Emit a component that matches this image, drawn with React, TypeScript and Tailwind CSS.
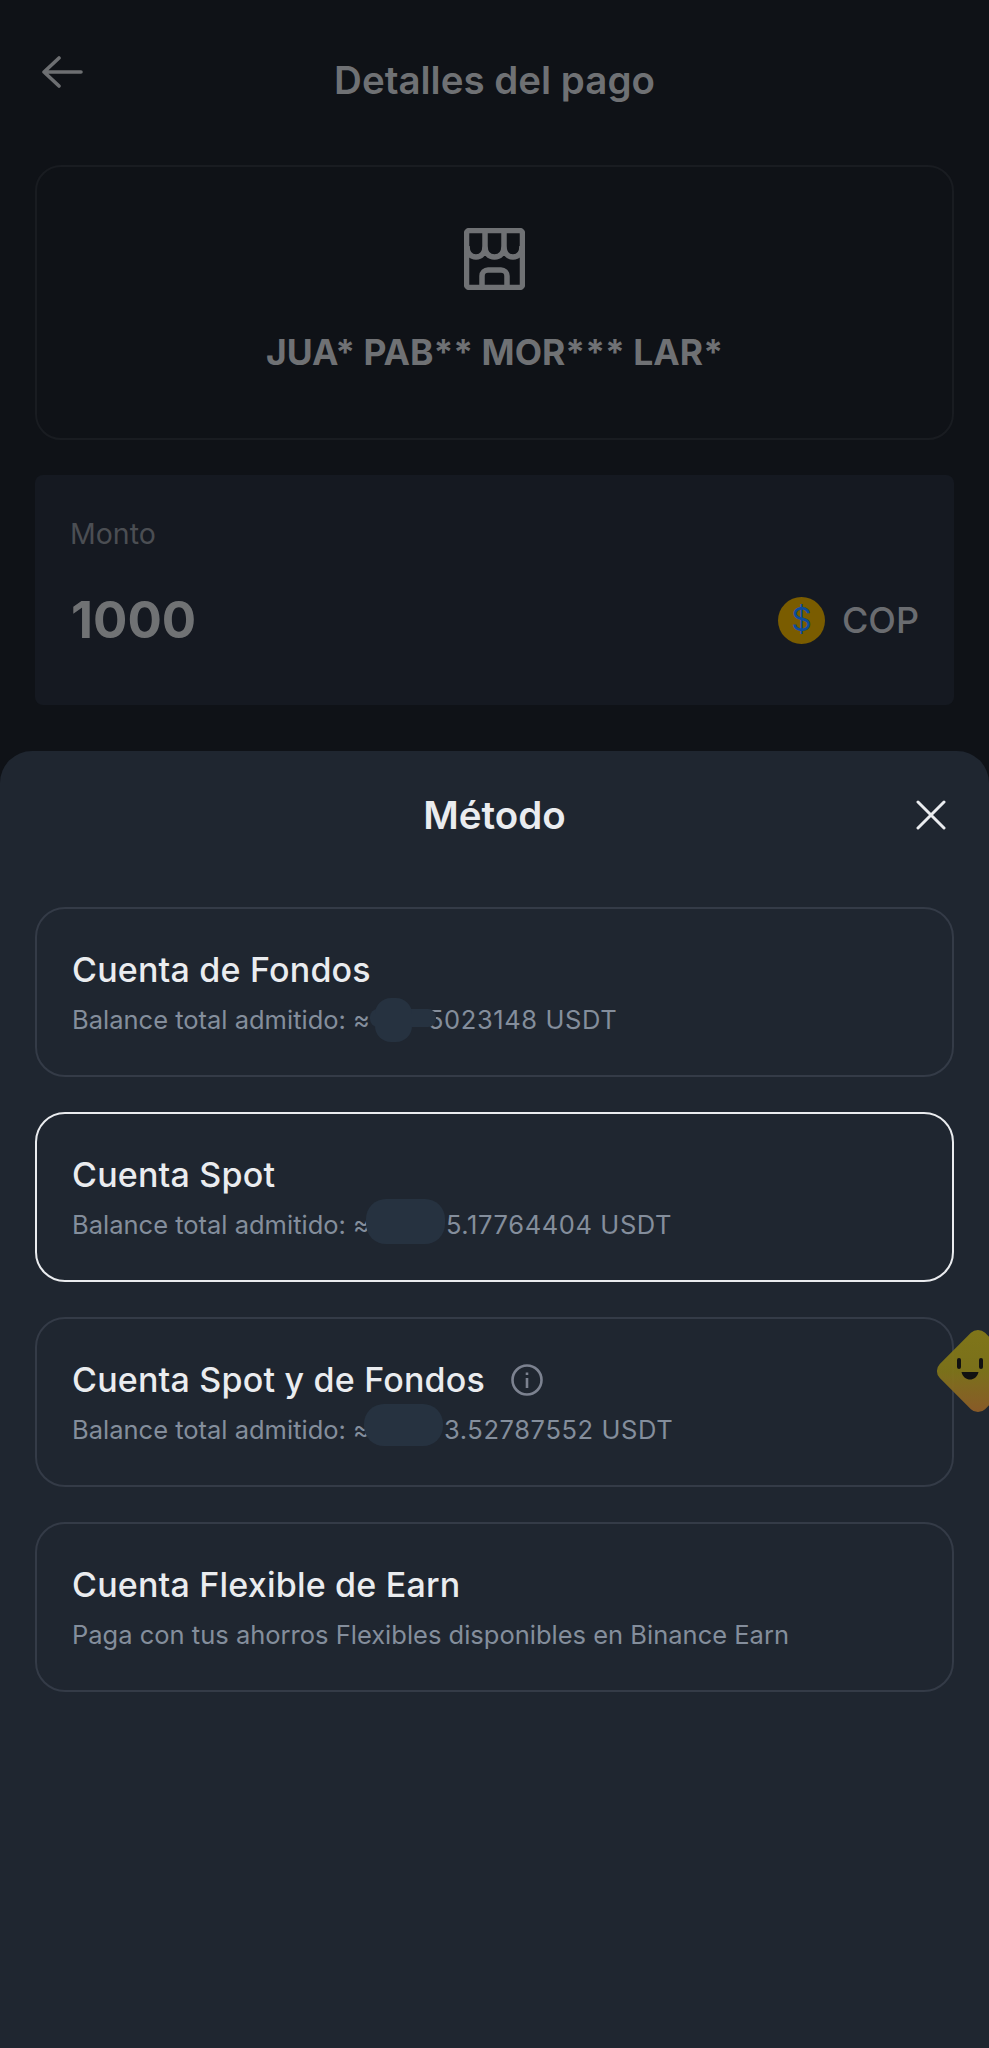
import React from "react";

function Smudge({ className }: { className: string }) {
  return <span className={"absolute bg-[#263240] " + className} />;
}

function Method({
  title,
  sub,
  selected,
  info,
  children,
}: {
  title: string;
  sub?: string;
  selected?: boolean;
  info?: boolean;
  children?: React.ReactNode;
}) {
  return (
    <div
      className={
        "h-[170px] rounded-[30px] border-[2px] px-[35px] pt-[39px] " +
        (selected ? "border-[#eaecef]" : "border-[#343b47]")
      }
    >
      <div className="flex items-center gap-[26px] h-[44px]">
        <span className="text-[34px] leading-[44px] font-medium tracking-[0.2px] text-[#eaecef]">{title}</span>
        {info && (
          <svg width="32" height="32" viewBox="0 0 32 32" fill="none" stroke="#7c8290" strokeWidth="2.6">
            <circle cx="16" cy="16" r="14.5" />
            <path d="M16 14v10M16 8.500v2.600" />
          </svg>
        )}
      </div>
      <div className="mt-[11px] text-[25.5px] leading-[34px] text-[#848e9c] whitespace-nowrap">
        {sub}
        {children}
      </div>
    </div>
  );
}

export default function App() {
  return (
    <div className="relative h-[2048px] w-full overflow-hidden bg-[#0f1217] flex flex-col font-['Inter',sans-serif]">
      <div className="h-[751px] shrink-0 px-[35px]">
        <div className="relative h-[165px] flex justify-center pt-[56px]">
          <svg className="absolute left-[6px] top-[56px]" width="42" height="32" viewBox="0 0 42 32" fill="none" stroke="#6d6f72" strokeWidth="3.6" strokeLinecap="round" strokeLinejoin="round">
            <path d="M40 16H3M18 2L3 16l15 14" />
          </svg>
          <span className="text-[38.5px] leading-[48px] font-semibold text-[#6f7174]">Detalles del pago</span>
        </div>
        <div className="h-[275px] rounded-[26px] border-[2px] border-[#191c21] flex flex-col items-center pt-[61px]">
          <svg width="61" height="62" viewBox="0 0 61 62" fill="none" stroke="#6f7174" strokeWidth="5.5">
            <rect x="2.500" y="2.500" width="56" height="57" rx="3" />
            <path d="M3 18c0 7 4 11 9 11s9-4 9-11V3M21 18c0 7 4 11 9.500 11S40 25 40 18V3M40 18c0 7 4 11 9 11s9-4 9-11" />
            <path d="M18 59V48a6 6 0 0 1 6-6h13a6 6 0 0 1 6 6v11" />
          </svg>
          <span className="mt-[40px] text-[35.5px] leading-[46px] font-bold text-[#6f7174]">JUA* PAB** MOR*** LAR*</span>
        </div>
        <div className="mt-[35px] h-[230px] rounded-[8px] bg-[#151921] pl-[35px] pr-[35px] pt-[42px]">
          <div className="text-[28.5px] leading-[34px] text-[#4b4e53]">Monto</div>
          <div className="mt-[37px] flex items-center justify-between h-[64px]">
            <span className="ml-[1px] text-[51px] leading-[64px] font-bold text-[#707274]">1000</span>
            <div className="flex items-center gap-[17px]">
              <span className="w-[47px] h-[47px] rounded-full bg-[#7a5c00] flex items-center justify-center text-[32px] font-normal text-[#0f4c9c]">$</span>
              <span className="text-[36px] font-medium text-[#6a6c70]">COP</span>
            </div>
          </div>
        </div>
      </div>

      <div className="flex-1 rounded-t-[32px] bg-[#1f2630] px-[35px]">
        <div className="relative h-[156px] flex justify-center pt-[40px]">
          <span className="text-[38.5px] leading-[48px] font-semibold text-[#eaecef]">Método</span>
          <svg className="absolute right-[8px] top-[49px]" width="30" height="30" viewBox="0 0 30 30" fill="none" stroke="#eaecef" strokeWidth="3" strokeLinecap="round">
            <path d="M2 2l26 26M28 2L2 28" />
          </svg>
        </div>
        <div className="flex flex-col gap-[35px]">
          <Method title="Cuenta de Fondos" sub="Balance total admitido: ≈">
            <span className="relative inline-block w-[58px] h-[20px]">
              <Smudge className="left-0 top-[0px] w-[66px] h-[18px] rounded-[8px]" />
              <Smudge className="left-[5px] top-[-11px] w-[37px] h-[44px] rounded-[16px]" />
            </span>
            <span className="tracking-[0.6px]">5023148 USDT</span>
          </Method>
          <Method title="Cuenta Spot" sub="Balance total admitido: ≈" selected>
            <span className="relative inline-block w-[76px] h-[20px]">
              <Smudge className="left-[-4px] top-[-15px] w-[79px] h-[45px] rounded-[20px]" />
            </span>
            <span className="tracking-[0.6px]">5.17764404 USDT</span>
          </Method>
          <Method title="Cuenta Spot y de Fondos" sub="Balance total admitido: ≈" info>
            <span className="relative inline-block w-[74px] h-[20px]">
              <Smudge className="left-[-6px] top-[-15px] w-[79px] h-[42px] rounded-[20px]" />
            </span>
            <span className="tracking-[0.6px]">3.52787552 USDT</span>
          </Method>
          <Method title="Cuenta Flexible de Earn" sub="Paga con tus ahorros Flexibles disponibles en Binance Earn" />
        </div>
      </div>

      <div className="absolute left-[946px] top-[1339px] w-[64px] h-[64px] rotate-45 rounded-[10px] bg-gradient-to-br from-[#857a18] via-[#7f7419] to-[#8f5a28] opacity-95" />
      <svg className="absolute left-[950px] top-[1355px]" width="39" height="32" viewBox="0 0 39 32" fill="#111">
        <rect x="7" y="3" width="4" height="11" rx="2" />
        <rect x="29" y="3" width="4" height="11" rx="2" />
        <path d="M11.500 17h17c-1 5-5 7.500-8.500 7.500S12.500 22 11.500 17z" />
      </svg>
    </div>
  );
}
